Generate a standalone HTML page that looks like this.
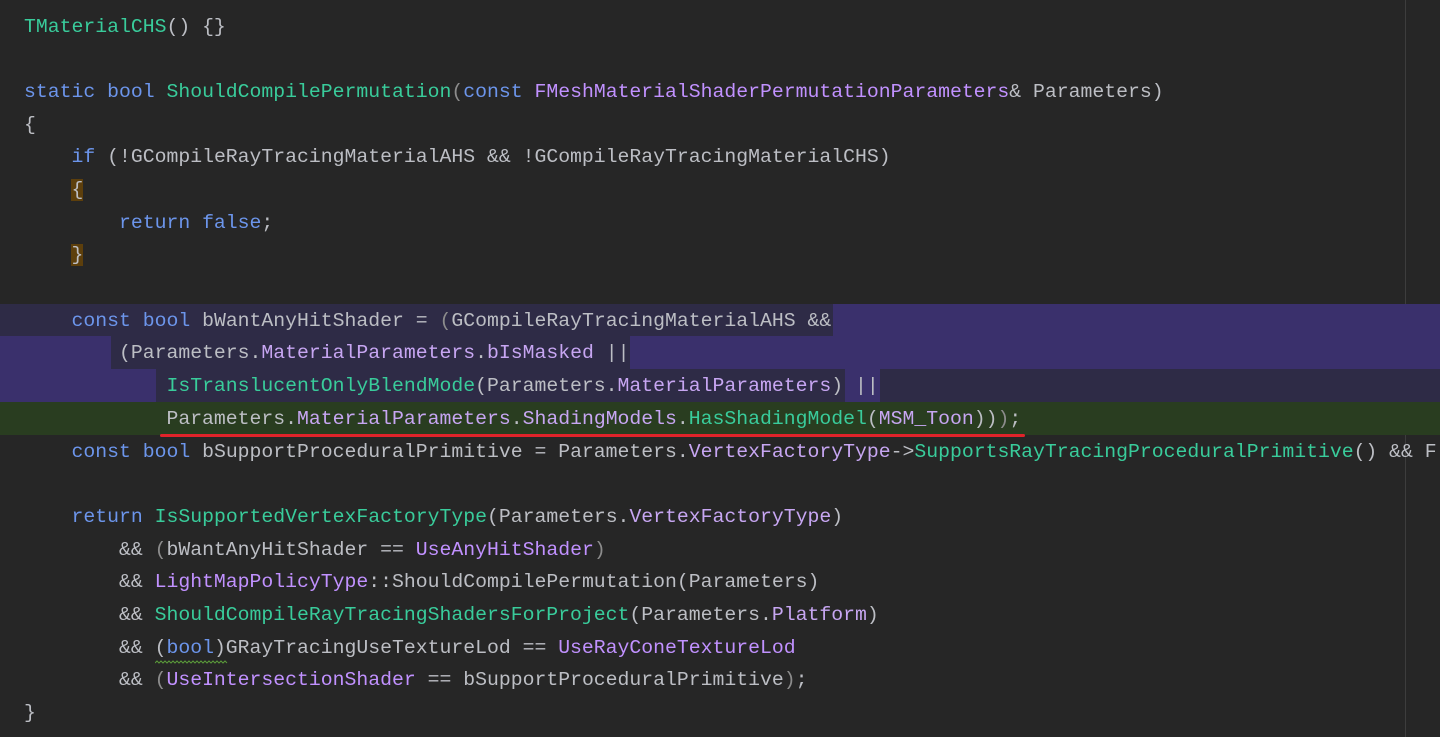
<!DOCTYPE html>
<html><head><meta charset="utf-8"><style>
html,body{margin:0;padding:0;background:#262626;width:1440px;height:737px;overflow:hidden}
#c{position:absolute;left:0;top:9.6px;width:1440px}
.l{position:relative;height:32.7px;line-height:35.5px;white-space:pre;font-family:"Liberation Mono",monospace;font-size:19.8px;color:#bcbec4;padding-left:24px;overflow:hidden}
.k{color:#6c95eb}.f{color:#39cc9b}.p{color:#c191ff}.m{color:#c7a6f2}.g{color:#8c8c8c}
.bg{position:absolute;top:0;height:32.7px}
.t{position:relative}
.br{background:#5d3f0c}
.vl{position:absolute;left:1405px;top:0;width:1px;height:737px;background:#3d3d3d}
.red{position:absolute;left:160px;top:434px;width:865px;height:3px;background:#e0232a;border-radius:2px}
.wavy{position:absolute;left:155px;top:660px;width:73px;height:4px}
</style></head><body>
<div class="vl"></div>
<div id="c">
<div class="l"><span class="f">TMaterialCHS</span>() {}</div>
<div class="l"> </div>
<div class="l"><span class="k">static bool </span><span class="f">ShouldCompilePermutation</span><span class="g">(</span><span class="k">const </span><span class="p">FMeshMaterialShaderPermutationParameters</span>&amp; Parameters)</div>
<div class="l">{</div>
<div class="l">    <span class="k">if</span> (!GCompileRayTracingMaterialAHS &amp;&amp; !GCompileRayTracingMaterialCHS)</div>
<div class="l">    <span class="br">{</span></div>
<div class="l">        <span class="k">return false</span>;</div>
<div class="l">    <span class="br">}</span></div>
<div class="l"> </div>
<div class="l"><div class="bg" style="left:0;width:833px;background:#2e2b46"></div><div class="bg" style="left:833px;width:607px;background:#3a306c"></div><span class="t">    <span class="k">const bool</span> bWantAnyHitShader = <span class="g">(</span>GCompileRayTracingMaterialAHS &amp;&amp;</span></div>
<div class="l"><div class="bg" style="left:0;width:111px;background:#3a306c"></div><div class="bg" style="left:111px;width:519px;background:#2e2b46"></div><div class="bg" style="left:630px;width:810px;background:#3a306c"></div><span class="t">        (Parameters.<span class="m">MaterialParameters</span>.<span class="m">bIsMasked</span> ||</span></div>
<div class="l"><div class="bg" style="left:0;width:156px;background:#3a306c"></div><div class="bg" style="left:156px;width:689px;background:#2e2b46"></div><div class="bg" style="left:845px;width:35px;background:#3a306c"></div><div class="bg" style="left:880px;width:560px;background:#2e2b46"></div><span class="t">            <span class="f">IsTranslucentOnlyBlendMode</span>(Parameters.<span class="m">MaterialParameters</span>) ||</span></div>
<div class="l" style="background:#293d20"><span class="t">            Parameters.<span class="m">MaterialParameters</span>.<span class="m">ShadingModels</span>.<span class="f">HasShadingModel</span>(<span class="m">MSM_Toon</span>))<span class="g">)</span>;</span></div>
<div class="l">    <span class="k">const bool</span> bSupportProceduralPrimitive = Parameters.<span class="m">VertexFactoryType</span>-&gt;<span class="f">SupportsRayTracingProceduralPrimitive</span>() &amp;&amp; F</div>
<div class="l"> </div>
<div class="l">    <span class="k">return </span><span class="f">IsSupportedVertexFactoryType</span>(Parameters.<span class="m">VertexFactoryType</span>)</div>
<div class="l">        &amp;&amp; <span class="g">(</span>bWantAnyHitShader == <span class="p">UseAnyHitShader</span><span class="g">)</span></div>
<div class="l">        &amp;&amp; <span class="p">LightMapPolicyType</span>::ShouldCompilePermutation(Parameters)</div>
<div class="l">        &amp;&amp; <span class="f">ShouldCompileRayTracingShadersForProject</span>(Parameters.<span class="m">Platform</span>)</div>
<div class="l">        &amp;&amp; (<span class="k">bool</span>)GRayTracingUseTextureLod == <span class="p">UseRayConeTextureLod</span></div>
<div class="l">        &amp;&amp; <span class="g">(</span><span class="p">UseIntersectionShader</span> == bSupportProceduralPrimitive<span class="g">)</span>;</div>
<div class="l">}</div>
</div>
<div class="red"></div>
<svg class="wavy" viewBox="0 0 73 4"><path d="M0 3 L2 1 L4 3 L6 1 L8 3 L10 1 L12 3 L14 1 L16 3 L18 1 L20 3 L22 1 L24 3 L26 1 L28 3 L30 1 L32 3 L34 1 L36 3 L38 1 L40 3 L42 1 L44 3 L46 1 L48 3 L50 1 L52 3 L54 1 L56 3 L58 1 L60 3 L62 1 L64 3 L66 1 L68 3 L70 1 L72 3" fill="none" stroke="#5a9a3a" stroke-width="1"/></svg>
</body></html>
